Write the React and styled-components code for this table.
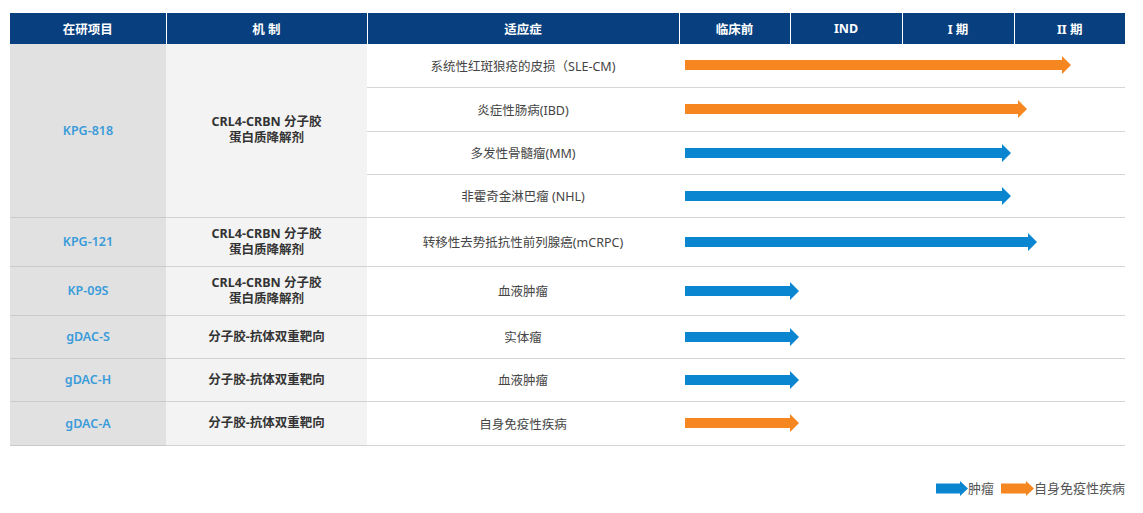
import React from "react";
import styled, { createGlobalStyle } from "styled-components";

const GlobalStyle = createGlobalStyle`
  html, body { margin: 0; padding: 0; background: #ffffff; }
  body { font-family: "Noto Sans", "Noto Sans CJK SC", sans-serif; }
`;

const ORANGE = "#f6861f";
const BLUE = "#0a86d0";

const Page = styled.div`
  padding: 13px 18px 0 10px;
  width: 1115px;
`;

const Table = styled.table`
  width: 1115px;
  border-collapse: collapse;
  table-layout: fixed;
`;

const HeadCell = styled.th`
  height: 31px;
  padding: 0;
  background: #073f7f;
  color: #ffffff;
  font-family: "Noto Sans", "Noto Sans CJK SC", sans-serif;
  font-size: 12.5px;
  font-weight: 700;
  text-align: center;
  border-left: 1px solid #ffffff;
  &:first-child { border-left: none; }
`;

const Row = styled.tr`
  height: ${(p) => p.$h}px;
`;

const ProjectCell = styled.td`
  background: #e1e1e1;
  color: #3a9bda;
  font-size: 12.5px;
  font-weight: 600;
  text-align: center;
  padding: 0;
  border-bottom: 1px solid #cacaca;
`;

const MechCell = styled.td`
  background: #f3f3f3;
  color: #333333;
  font-size: 12.5px;
  font-weight: 700;
  line-height: 16px;
  text-align: center;
  padding: 0;
  border-bottom: 1px solid #d2d2d2;
`;

const IndicationCell = styled.td`
  background: #ffffff;
  color: #444444;
  font-size: 12.5px;
  font-weight: 400;
  text-align: center;
  padding: 0;
  border-bottom: 1px solid #d6d6d6;
`;

const StageCell = styled.td`
  padding: 0 0 0 6px;
  border-bottom: 1px solid #d6d6d6;
  vertical-align: middle;
  line-height: 0;
`;

const Legend = styled.div`
  display: flex;
  justify-content: flex-end;
  align-items: center;
  margin-top: 35px;
  font-size: 13px;
  color: #555555;
`;

const LegendItem = styled.span`
  display: inline-flex;
  align-items: center;
  margin-left: 7px;
  line-height: 15px;
`;

function Arrow({ width, color, height = 18, bar = 10, head = 9 }) {
  const h = height;
  const t = (h - bar) / 2;
  const pts = [
    [0, t],
    [width - head, t],
    [width - head, 0],
    [width, h / 2],
    [width - head, h],
    [width - head, h - t],
    [0, h - t],
  ]
    .map((p) => p.join(","))
    .join(" ");
  return (
    <svg width={width} height={h} viewBox={`0 0 ${width} ${h}`} style={{ display: "block" }}>
      <polygon points={pts} fill={color} />
    </svg>
  );
}

const MECH_DEGRADER = (
  <>
    CRL4-CRBN 分子胶
    <br />
    蛋白质降解剂
  </>
);
const MECH_DUAL = "分子胶-抗体双重靶向";

const groups = [
  {
    project: "KPG-818",
    mech: MECH_DEGRADER,
    rows: [
      { ind: "系统性红斑狼疮的皮损（SLE-CM)", w: 386, c: ORANGE, h: 43 },
      { ind: "炎症性肠病(IBD)", w: 342, c: ORANGE, h: 44 },
      { ind: "多发性骨髓瘤(MM)", w: 326, c: BLUE, h: 43 },
      { ind: "非霍奇金淋巴瘤 (NHL)", w: 326, c: BLUE, h: 43 },
    ],
  },
  { project: "KPG-121", mech: MECH_DEGRADER, rows: [{ ind: "转移性去势抵抗性前列腺癌(mCRPC)", w: 352, c: BLUE, h: 49 }] },
  { project: "KP-09S", mech: MECH_DEGRADER, rows: [{ ind: "血液肿瘤", w: 114, c: BLUE, h: 49 }] },
  { project: "gDAC-S", mech: MECH_DUAL, rows: [{ ind: "实体瘤", w: 114, c: BLUE, h: 43 }] },
  { project: "gDAC-H", mech: MECH_DUAL, rows: [{ ind: "血液肿瘤", w: 114, c: BLUE, h: 43 }] },
  { project: "gDAC-A", mech: MECH_DUAL, rows: [{ ind: "自身免疫性疾病", w: 114, c: ORANGE, h: 44 }] },
];

const headers = ["在研项目", "机 制", "适应症", "临床前", "IND", "I 期", "II 期"];
const widths = [156, 201, 312, 111, 112, 112, 111];

export default function App() {
  return (
    <>
      <GlobalStyle />
      <Page>
        <Table>
          <colgroup>
            {widths.map((w, i) => (
              <col key={i} style={{ width: w }} />
            ))}
          </colgroup>
          <thead>
            <tr>
              {headers.map((h) => (
                <HeadCell key={h}>{h}</HeadCell>
              ))}
            </tr>
          </thead>
          <tbody>
            {groups.map((g) =>
              g.rows.map((r, i) => (
                <Row key={g.project + i} $h={r.h}>
                  {i === 0 && (
                    <>
                      <ProjectCell rowSpan={g.rows.length}>{g.project}</ProjectCell>
                      <MechCell rowSpan={g.rows.length}>{g.mech}</MechCell>
                    </>
                  )}
                  <IndicationCell>{r.ind}</IndicationCell>
                  <StageCell colSpan={4}>
                    <Arrow width={r.w} color={r.c} />
                  </StageCell>
                </Row>
              ))
            )}
          </tbody>
        </Table>
        <Legend>
          <LegendItem>
            <Arrow width={32} color={BLUE} height={15} bar={10} head={8} />
            肿瘤
          </LegendItem>
          <LegendItem>
            <Arrow width={33} color={ORANGE} height={15} bar={10} head={8} />
            自身免疫性疾病
          </LegendItem>
        </Legend>
      </Page>
    </>
  );
}
